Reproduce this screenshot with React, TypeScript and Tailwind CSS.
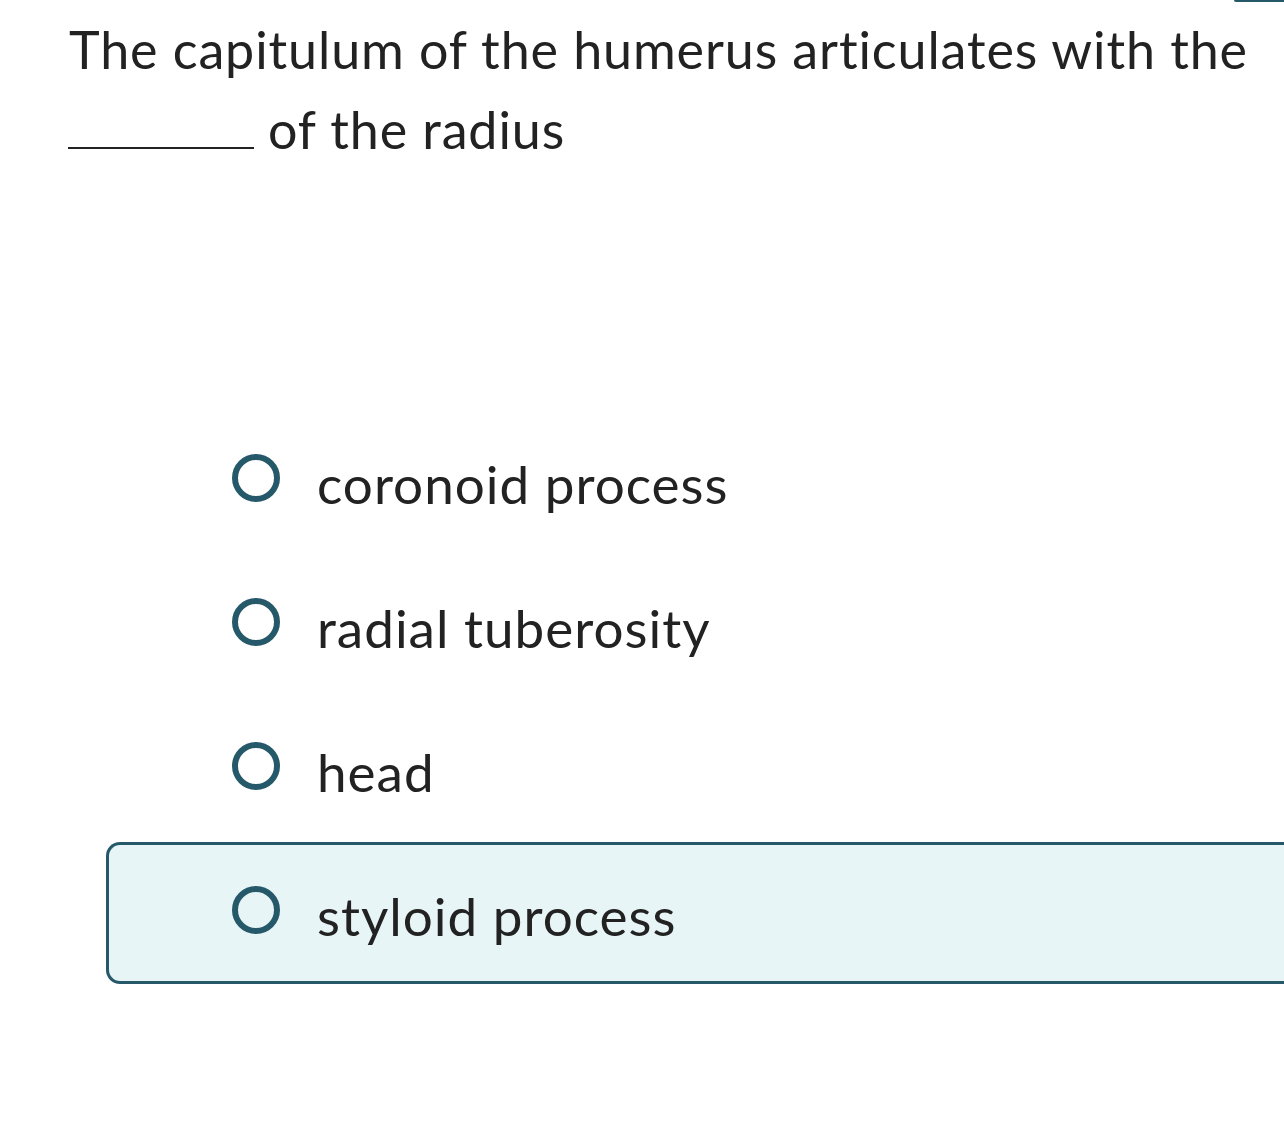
const options = ["coronoid process", "radial tuberosity", "head", "styloid process"];

function Radio() {
  return <span className="mb-[6px] block h-[48px] w-[48px] shrink-0 rounded-full border-[6px] border-[#25596a]" />;
}

export default function App() {
  const selected = 3;
  return (
    <div className="relative min-h-screen overflow-hidden bg-white font-['Lato',sans-serif] text-[#222222]">
      <div className="flex justify-end">
        <div className="h-[2px] w-[50px] rounded-bl-full bg-[#25596a]" />
      </div>
      <p className="ml-[69px] mr-[10px] mt-[7px] text-[52px] leading-[80px] tracking-[0.9px]">
        The capitulum of the humerus articulates with the{" "}
        <span className="-ml-[1px] mr-[14px] inline-block w-[186px] border-b-2 border-[#222222] align-baseline" />
        of the radius
      </p>
      <div className="ml-[106px] mt-[241px] flex flex-col gap-[2px]">
        {options.map((o, i) => (
          <label
            key={o}
            className={
              "flex h-[142px] items-center gap-[37px] pl-[123px] " +
              (i === selected
                ? "rounded-l-[14px] border-y-[3px] border-l-[3px] border-[#25596a] bg-[#e8f5f7]"
                : "border-y-[3px] border-l-[3px] border-transparent")
            }
          >
            <Radio />
            <span className="pt-[6px] text-[53px] tracking-[1px]">{o}</span>
          </label>
        ))}
      </div>
    </div>
  );
}
